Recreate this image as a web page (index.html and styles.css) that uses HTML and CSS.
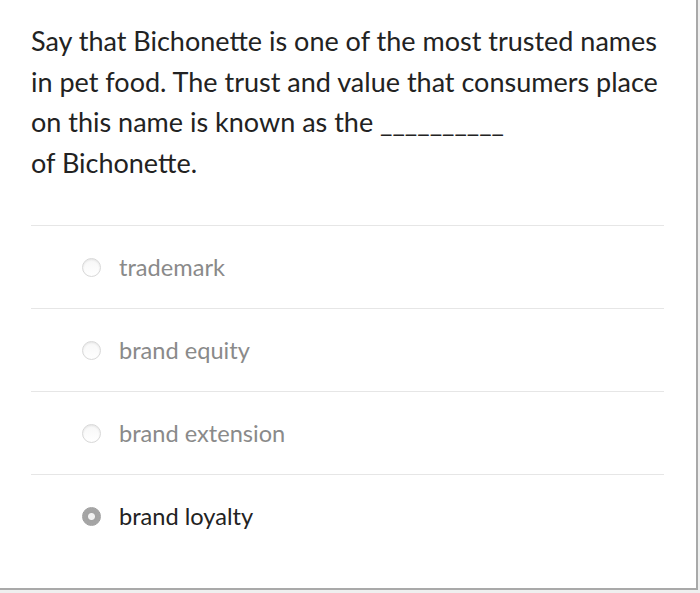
FILE: index.html
```html
<!DOCTYPE html>
<html>
<head>
<meta charset="utf-8">
<link rel="stylesheet" href="styles.css">
</head>
<body>
<div class="frame">
  <div class="question">Say that Bichonette is one of the most trusted names in pet food. The trust and value that consumers place on this name is known as the __________<br>of Bichonette.</div>
  <div class="options">
    <div class="option"><span class="radio"></span><span class="label">trademark</span></div>
    <div class="option"><span class="radio"></span><span class="label">brand equity</span></div>
    <div class="option"><span class="radio"></span><span class="label">brand extension</span></div>
    <div class="option selected"><span class="radio"></span><span class="label">brand loyalty</span></div>
  </div>
</div>
</body>
</html>
```
FILE: styles.css
```css
html, body {
  margin: 0;
  padding: 0;
  background: #efefef;
}
.frame {
  width: 696px;
  height: 588px;
  background: #fff;
  border-right: 2px solid #a9a9a9;
  border-bottom: 2px solid #a9a9a9;
  font-family: Lato, "Open Sans", sans-serif;
}
.question {
  padding: 21px 0 0 31px;
  width: 636px;
  font-size: 27px;
  line-height: 40.5px;
  color: #222;
}
.options {
  margin-top: 42px;
  margin-left: 31px;
  width: 633px;
}
.option {
  height: 82px;
  border-top: 1.5px solid #e6e6e6;
  display: flex;
  align-items: center;
  padding-left: 51px;
}
.radio {
  width: 17px;
  height: 17px;
  border-radius: 50%;
  border: 1px solid #d8d8d8;
  background: linear-gradient(#f7f7f7, #fff);
  box-shadow: inset 0 1px 2px rgba(0,0,0,0.08);
  margin-right: 18px;
  flex: none;
}
.label {
  font-size: 23.6px;
  color: #8a8a8a;
}
.selected .label {
  color: #222;
}
.selected .radio {
  background: radial-gradient(circle, #f2f2f2 0 3px, #a3a3a3 4px, #a8a8a8 100%);
  border-color: #a0a0a0;
  box-shadow: none;
}
```
